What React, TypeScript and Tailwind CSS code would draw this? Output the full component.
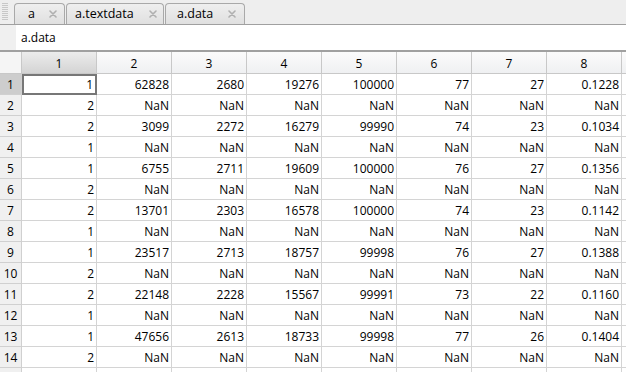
import React from "react";

const rows: string[][] = [
  ["1", "62828", "2680", "19276", "100000", "77", "27", "0.1228"],
  ["2", "NaN", "NaN", "NaN", "NaN", "NaN", "NaN", "NaN"],
  ["2", "3099", "2272", "16279", "99990", "74", "23", "0.1034"],
  ["1", "NaN", "NaN", "NaN", "NaN", "NaN", "NaN", "NaN"],
  ["1", "6755", "2711", "19609", "100000", "76", "27", "0.1356"],
  ["2", "NaN", "NaN", "NaN", "NaN", "NaN", "NaN", "NaN"],
  ["2", "13701", "2303", "16578", "100000", "74", "23", "0.1142"],
  ["1", "NaN", "NaN", "NaN", "NaN", "NaN", "NaN", "NaN"],
  ["1", "23517", "2713", "18757", "99998", "76", "27", "0.1388"],
  ["2", "NaN", "NaN", "NaN", "NaN", "NaN", "NaN", "NaN"],
  ["2", "22148", "2228", "15567", "99991", "73", "22", "0.1160"],
  ["1", "NaN", "NaN", "NaN", "NaN", "NaN", "NaN", "NaN"],
  ["1", "47656", "2613", "18733", "99998", "77", "26", "0.1404"],
  ["2", "NaN", "NaN", "NaN", "NaN", "NaN", "NaN", "NaN"],
  ["", "", "", "", "", "", "", ""],
];

function CloseX() {
  return (
    <svg width="8" height="8" viewBox="0 0 8 8" className="shrink-0">
      <path d="M1 1 L7 7 M7 1 L1 7" stroke="#b0b0b0" strokeWidth="1.6" strokeLinecap="round" />
    </svg>
  );
}

function Tab({ label, active, w, pl, pr }: { label: string; active?: boolean; w: number; pl: number; pr: number }) {
  return (
    <div
      className={
        "relative flex items-center rounded-t-[4px] border border-b-0 border-[#a9a9a9] " +
        (active
          ? "z-10 -mb-px h-[24px] bg-gradient-to-b from-[#f4f4f4] to-[#fbfbfb]"
          : "h-[21px] bg-gradient-to-b from-[#efefef] to-[#e0e0e0]")
      }
      style={{ width: w, paddingLeft: pl, paddingRight: pr }}
    >
      <span className="text-[12.5px] leading-none text-black">{label}</span>
      <span className="ml-auto">
        <CloseX />
      </span>
    </div>
  );
}

export default function App() {
  return (
    <div
      className="h-[372px] w-[626px] overflow-hidden bg-white"
      style={{ fontFamily: '"Open Sans", "Noto Sans", sans-serif' }}
    >
      {/* tab bar */}
      <div className="flex h-[25px] items-end border-b border-[#a0a0a0] bg-[#eeeeee]">
        <div className="flex h-[24px] w-[14px] flex-col gap-[1px] self-start pl-[2px] pt-[3px]">
          {Array.from({ length: 9 }).map((_, i) => (
            <div key={i} className="h-px w-[6px] bg-[#c8c8c8]" />
          ))}
        </div>
        <div className="flex items-end gap-px">
          <Tab label="a" w={51} pl={13} pr={7} />
          <Tab label="a.textdata" w={98} pl={8} pr={6} />
          <Tab label="a.data" w={80} pl={11} pr={8} />
        </div>
      </div>
      {/* address row */}
      <div className="flex h-[27px] items-center border-b-2 border-[#a0a0a0]">
        <div className="h-full w-[16px] bg-[#f0f0f0]" />
        <span className="pl-[5px] text-[12px] text-black">a.data</span>
      </div>
      {/* grid */}
      <div className="grid grid-cols-[22px_repeat(8,75px)_75px] text-[12px] text-black">
        <div className="h-[22px] border-r border-b border-[#c8c8c8] bg-[#f5f5f5]" />
        {[1, 2, 3, 4, 5, 6, 7, 8].map((c) => (
          <div
            key={c}
            className={
              "flex h-[22px] items-center justify-center border-r border-b border-[#c8c8c8] pt-[2px] " +
              (c === 1
                ? "bg-gradient-to-b from-[#ececec] to-[#d4d4d4]"
                : "bg-gradient-to-b from-[#fbfbfb] to-[#eff0f2]")
            }
          >
            {c}
          </div>
        ))}
        <div className="h-[22px] border-b border-[#c8c8c8] bg-gradient-to-b from-[#fbfbfb] to-[#eff0f2]" />
        {rows.map((r, ri) => (
          <React.Fragment key={ri}>
            <div
              className={
                "flex h-[21px] items-center justify-center border-r border-b border-[#d0d0d0] pt-px " +
                (ri === 0 ? "bg-[#cdcdcd]" : "bg-[#f0f0f0]")
              }
            >
              {ri < 14 ? ri + 1 : ""}
            </div>
            {r.map((v, ci) => (
              <div
                key={ci}
                className={
                  "flex h-[21px] items-center justify-end pr-[2px] pt-px " +
                  (ri === 0 && ci === 0
                    ? "border-2 border-[#777777]"
                    : "border-r border-b border-[#d4d4d4]")
                }
              >
                {v}
              </div>
            ))}
            <div className="h-[21px] border-b border-[#d4d4d4]" />
          </React.Fragment>
        ))}
      </div>
    </div>
  );
}
